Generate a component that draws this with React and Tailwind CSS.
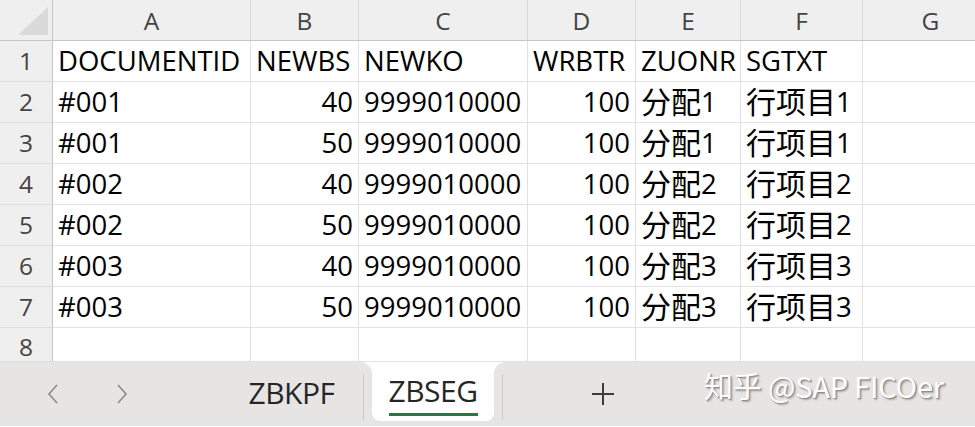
import React from "react";

const COLS = ["A", "B", "C", "D", "E", "F", "G"];
const WIDTHS = ["w-[198px]", "w-[108px]", "w-[169px]", "w-[108px]", "w-[105px]", "w-[122px]", "w-[136px]"];

const cjk = (s, n) => (
  <>
    <span className="text-[30px]">{s}</span>
    {n}
  </>
);

const ROWS = [
  [{ t: "DOCUMENTID" }, { t: "NEWBS" }, { t: "NEWKO" }, { t: "WRBTR" }, { t: "ZUONR" }, { t: "SGTXT" }, { t: "" }],
  [{ t: "#001" }, { t: "40", r: true }, { t: "9999010000" }, { t: "100", r: true }, { t: cjk("分配", "1") }, { t: cjk("行项目", "1") }, { t: "" }],
  [{ t: "#001" }, { t: "50", r: true }, { t: "9999010000" }, { t: "100", r: true }, { t: cjk("分配", "1") }, { t: cjk("行项目", "1") }, { t: "" }],
  [{ t: "#002" }, { t: "40", r: true }, { t: "9999010000" }, { t: "100", r: true }, { t: cjk("分配", "2") }, { t: cjk("行项目", "2") }, { t: "" }],
  [{ t: "#002" }, { t: "50", r: true }, { t: "9999010000" }, { t: "100", r: true }, { t: cjk("分配", "2") }, { t: cjk("行项目", "2") }, { t: "" }],
  [{ t: "#003" }, { t: "40", r: true }, { t: "9999010000" }, { t: "100", r: true }, { t: cjk("分配", "3") }, { t: cjk("行项目", "3") }, { t: "" }],
  [{ t: "#003" }, { t: "50", r: true }, { t: "9999010000" }, { t: "100", r: true }, { t: cjk("分配", "3") }, { t: cjk("行项目", "3") }, { t: "" }],
  [{ t: "" }, { t: "" }, { t: "" }, { t: "" }, { t: "" }, { t: "" }, { t: "" }],
];

const FONT = { fontFamily: '"Open Sans", "Noto Sans CJK SC", sans-serif' };

export default function App() {
  return (
    <div
      className="relative w-[975px] h-[427px] overflow-hidden bg-white text-black"
      style={FONT}
    >
      {/* Column header */}
      <div className="flex h-[41px] bg-[#efefef] border-b border-[#c6c6c6]">
        <div className="w-[53px] shrink-0 border-r border-[#c6c6c6] relative">
          <svg className="absolute left-0 top-0" width="52" height="40" viewBox="0 0 52 40">
            <polygon points="48,7 48,35 18,35" fill="#dadada" />
          </svg>
        </div>
        {COLS.map((c, i) => (
          <div
            key={c}
            className={`${WIDTHS[i]} shrink-0 border-r border-[#d9d9d9] flex items-end justify-center pb-[1px] text-[24.5px] leading-[36px] text-[#444]`}
          >
            {c}
          </div>
        ))}
      </div>

      {/* Rows */}
      {ROWS.map((row, ri) => (
        <div key={ri} className={`flex ${ri === 7 ? "h-[34px]" : "h-[41px]"}`}>
          <div className="w-[53px] shrink-0 bg-[#efefef] border-r border-[#c6c6c6] border-b border-b-[#dedede] flex items-center justify-center text-[24.5px] text-[#444]">
            <span className={ri === 7 ? "mt-[6px]" : ""}>{ri + 1}</span>
          </div>
          {row.map((cell, ci) => (
            <div
              key={ci}
              className={`${WIDTHS[ci]} shrink-0 border-r border-b border-[#e1e1e1] flex items-center whitespace-nowrap text-[27.5px] leading-none ${
                cell.r ? "justify-end pr-[5px]" : "justify-start pl-[5px]"
              }`}
            >
              {cell.t}
            </div>
          ))}
        </div>
      ))}

      {/* Tab bar */}
      <div className="flex h-[64px] bg-white">
        <div className="w-[372px] shrink-0 bg-[#e7e4e4] rounded-tr-[12px] flex items-center">
          <div className="w-[220px] flex items-center">
            <svg className="ml-[47px]" width="12" height="22" viewBox="0 0 12 22">
              <path d="M10 2 L2 11 L10 20" fill="none" stroke="#8c8c8c" strokeWidth="1.6" />
            </svg>
            <svg className="ml-[57px]" width="12" height="22" viewBox="0 0 12 22">
              <path d="M2 2 L10 11 L2 20" fill="none" stroke="#8c8c8c" strokeWidth="1.6" />
            </svg>
          </div>
          <div className="w-[143px] flex justify-center text-[30px] tracking-[-0.5px] text-[#262626] mb-[4px]">
            ZBKPF
          </div>
          <div className="w-px h-[46px] bg-[#c9c9c9] self-end mb-[6px]" />
        </div>
        <div className="w-[122px] shrink-0 bg-[#e7e4e4]">
          <div className="h-[59px] bg-white rounded-b-[8px] flex flex-col items-center">
            <div className="text-[30px] tracking-[-0.5px] text-[#262626] leading-[40px] mt-[9px]">ZBSEG</div>
            <div className="w-[89px] h-[3px] bg-[#1f7a43] mt-[2px]" />
          </div>
        </div>
        <div className="flex-1 bg-[#e7e4e4] rounded-tl-[12px] flex items-center">
          <div className="w-px h-[46px] bg-[#c9c9c9] self-end mb-[6px] ml-[8px]" />
          <div className="w-[200px] flex justify-center">
            <svg width="24" height="24" viewBox="0 0 24 24">
              <path d="M12 1 V23 M1 12 H23" stroke="#3c3c3c" strokeWidth="2" />
            </svg>
          </div>
        </div>
      </div>

      {/* Watermark */}
      <div
        className="absolute left-[704px] top-[364px] text-[29px] text-white whitespace-nowrap tracking-[-0.2px]"
        style={{
          fontFamily: '"Noto Sans CJK SC", "Noto Sans", sans-serif',
          textShadow: "1px 1px 1px #8a8a8a, 2px 2px 2px rgba(0,0,0,0.25)",
        }}
      >
        知乎 @SAP FICOer
      </div>
    </div>
  );
}
